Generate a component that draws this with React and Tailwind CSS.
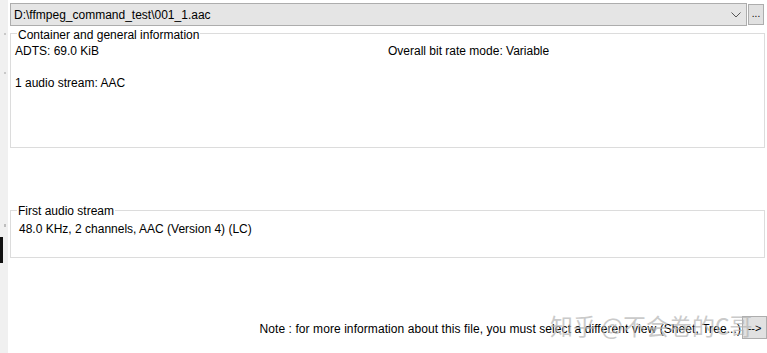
import React from "react";

export default function App() {
  const font = { fontFamily: '"Liberation Sans", Arial, sans-serif' };
  return (
    <div
      className="relative flex w-[767px] h-[353px] overflow-hidden bg-white text-[12px] leading-[16px] text-black"
      style={font}
    >
      {/* left strip */}
      <div className="relative w-[8px] h-full bg-[#f0f0f0] shrink-0">
        <div className="absolute left-0 top-[237px] w-[3px] h-[26px] bg-[#111]" />
        <div className="absolute left-[4px] top-[33px] w-[2px] h-[2px] bg-[#c8c8c8]" />
        <div className="absolute left-[4px] top-[72px] w-[2px] h-[2px] bg-[#c8c8c8]" />
        <div className="absolute left-[4px] top-[224px] w-[2px] h-[3px] bg-[#bdbdbd]" />
      </div>

      {/* main */}
      <div className="flex flex-col flex-1 pl-[2px] pr-[2px]">
        {/* combo row */}
        <div className="flex items-start mt-[3px] h-[23px]">
          <div className="flex items-center w-[737px] h-[23px] border border-[#adadad] bg-[#e5e5e5] pl-[3px] pr-[4px]">
            <span className="flex-1">D:\ffmpeg_command_test\001_1.aac</span>
            <svg width="10" height="6" viewBox="0 0 10 6" className="mr-[1px]">
              <path d="M0.5 0.5 L5 5 L9.5 0.5" fill="none" stroke="#555" strokeWidth="1" />
            </svg>
          </div>
          <div className="ml-[1px] mt-[1px] flex items-center justify-center w-[16px] h-[21px] border border-[#adadad] bg-[#e1e1e1] text-[10px] leading-[10px] pb-[2px]">
            ...
          </div>
        </div>

        {/* group 1 */}
        <div className="relative mt-[7px] h-[115px] border border-[#dcdcdc] pl-[4px] pt-[9px]">
          <span className="absolute left-[6px] -top-[7px] bg-white px-[1px]">
            Container and general information
          </span>
          <div className="grid grid-cols-[373px_1fr]">
            <span>ADTS: 69.0 KiB</span>
            <span>Overall bit rate mode: Variable</span>
            <span className="h-[16px]" />
            <span />
            <span>1 audio stream: AAC</span>
            <span />
          </div>
        </div>

        {/* group 2 */}
        <div className="relative mt-[62px] h-[48px] border border-[#dcdcdc] pl-[8px] pt-[10px]">
          <span className="absolute left-[6px] -top-[8px] bg-white px-[1px]">
            First audio stream
          </span>
          <div>48.0 KHz, 2 channels, AAC (Version 4) (LC)</div>
        </div>

        {/* note row */}
        <div className="flex items-center justify-end mt-[58px] -mr-[2px]">
          <span className="mr-[1px] mt-[2px] tracking-[0.08px]">
            Note : for more information about this file, you must select a different view (Sheet, Tree...)
          </span>
          <div className="flex items-center justify-center w-[25px] h-[23px] border border-[#adadad] bg-[#e1e1e1] text-[11px]">
            --&gt;
          </div>
        </div>
      </div>

      {/* watermark */}
      <div
        className="absolute left-[550px] top-[310px] text-[23px] leading-[30px] text-[#b4b4b4] opacity-70 whitespace-nowrap pointer-events-none"
        style={{ fontFamily: '"Noto Sans CJK SC", sans-serif' }}
      >
        知乎 @不会卷的C哥
      </div>
    </div>
  );
}
